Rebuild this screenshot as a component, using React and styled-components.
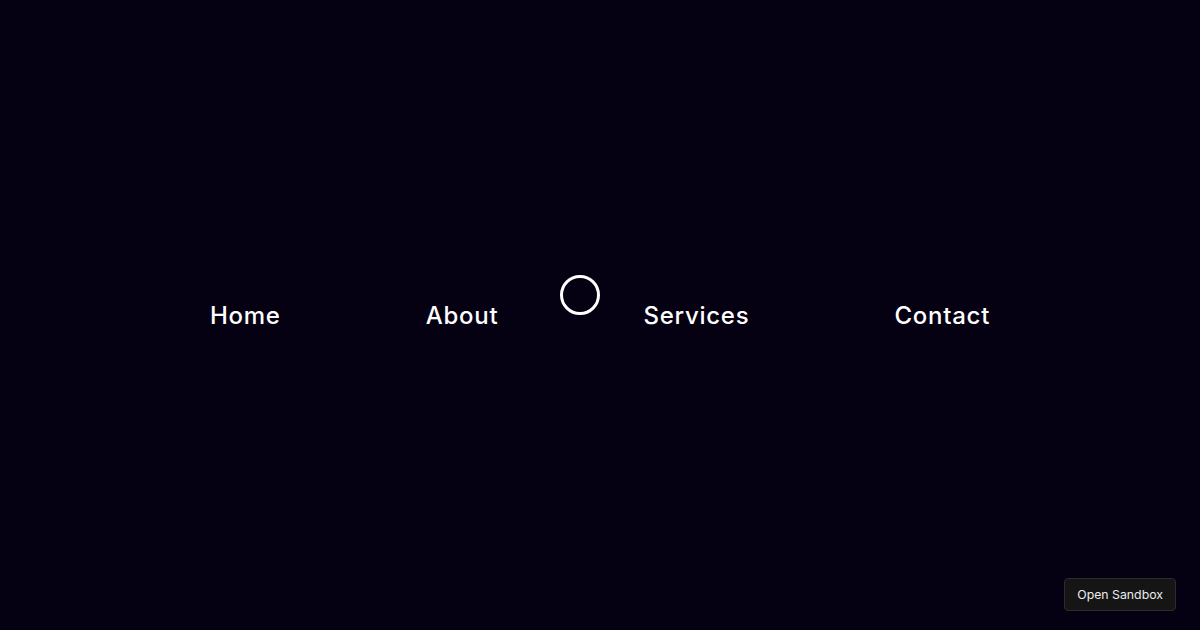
import React from 'react';
import styled, { createGlobalStyle } from 'styled-components';

const GlobalStyle = createGlobalStyle`
  html, body {
    margin: 0;
    padding: 0;
    height: 100%;
    background: #060013;
  }
  #root {
    height: 100%;
  }
`;

const Page = styled.main`
  height: 100vh;
  display: flex;
  align-items: center;
  justify-content: center;
  background: #060013;
  position: relative;
  overflow: hidden;
`;

const Menu = styled.ul`
  list-style: none;
  margin: 0;
  padding: 0;
  display: flex;
  align-items: center;
  gap: 145px;
`;

const Item = styled.li`
  font-family: Inter, 'Open Sans', sans-serif;
  font-size: 24px;
  font-weight: 500;
  letter-spacing: 0.75px;
  color: #fff;
  cursor: pointer;
`;

const Cursor = styled.div`
  position: absolute;
  left: 560px;
  top: 275px;
  width: 34px;
  height: 34px;
  border: 3px solid #fff;
  border-radius: 50%;
  pointer-events: none;
`;

const SandboxButton = styled.a`
  position: fixed;
  right: 24px;
  bottom: 19px;
  height: 33px;
  padding: 0 12px;
  display: flex;
  align-items: center;
  box-sizing: border-box;
  background: #151515;
  border: 1px solid #2c2c2c;
  border-radius: 4px;
  color: #ececec;
  font-family: Inter, 'Liberation Sans', sans-serif;
  font-size: 12.3px;
  text-decoration: none;
`;

const links = ['Home', 'About', 'Services', 'Contact'];

const App = () => (
  <>
    <GlobalStyle />
    <Page>
      <Menu>
        {links.map(link => (
          <Item key={link}>{link}</Item>
        ))}
      </Menu>
      <Cursor />
      <SandboxButton href="#">Open Sandbox</SandboxButton>
    </Page>
  </>
);

export default App;
